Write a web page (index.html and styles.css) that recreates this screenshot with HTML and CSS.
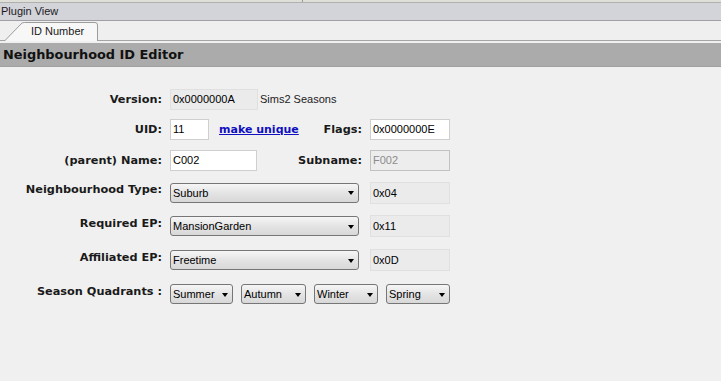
FILE: index.html
```html
<!DOCTYPE html>
<html>
<head>
<meta charset="utf-8">
<link rel="stylesheet" href="styles.css">
</head>
<body>
<div class="topstrip"><span class="tick"></span></div>
<div class="titlebar">Plugin View</div>
<div class="tabbar"><div class="tab">ID Number</div></div>
<div class="header">Neighbourhood ID Editor</div>
<div class="form">
  <div class="label">Version:</div>
  <div class="cell wide">
    <div class="field ro w87">0x0000000A</div>
    <span class="note">Sims2 Seasons</span>
  </div>

  <div class="label">UID:</div>
  <div class="cell">
    <div class="field w38">11</div>
    <a class="link" href="#">make unique</a>
    <span class="label sub">Flags:</span>
  </div>
  <div class="cell"><div class="field w80">0x0000000E</div></div>

  <div class="label">(parent) Name:</div>
  <div class="cell">
    <div class="field w86">C002</div>
    <span class="label sub">Subname:</span>
  </div>
  <div class="cell"><div class="field dis w80">F002</div></div>

  <div class="label up">Neighbourhood Type:</div>
  <div class="cell"><div class="select w189"><span>Suburb</span><i class="arrow"></i></div></div>
  <div class="cell"><div class="field ro w80 tall">0x04</div></div>

  <div class="label up">Required EP:</div>
  <div class="cell"><div class="select w189"><span>MansionGarden</span><i class="arrow"></i></div></div>
  <div class="cell"><div class="field ro w80 tall">0x11</div></div>

  <div class="label up">Affiliated EP:</div>
  <div class="cell"><div class="select w189"><span>Freetime</span><i class="arrow"></i></div></div>
  <div class="cell"><div class="field ro w80 tall">0x0D</div></div>

  <div class="label up">Season Quadrants :</div>
  <div class="cell wide seasons">
    <div class="select w63"><span>Summer</span><i class="arrow"></i></div>
    <div class="select w65"><span>Autumn</span><i class="arrow"></i></div>
    <div class="select w64"><span>Winter</span><i class="arrow"></i></div>
    <div class="select w64"><span>Spring</span><i class="arrow"></i></div>
  </div>
</div>
</body>
</html>
```
FILE: styles.css
```css
html, body {
  margin: 0;
  padding: 0;
}
body {
  width: 721px;
  height: 381px;
  overflow: hidden;
  background: #f0f0f0;
  font-family: "Liberation Sans", Arial, sans-serif;
  font-size: 11px;
  color: #000;
}
.topstrip {
  height: 2px;
  background: #dedfd6;
  border-bottom: 1px solid #b0b0b0;
  display: flex;
}
.tick {
  margin-left: 302px;
  width: 1px;
  background: #9a9a9a;
}
.titlebar {
  height: 17px;
  line-height: 17px;
  background: #d3d3da;
  border-bottom: 1px solid #a0a0a4;
  padding-left: 1px;
  color: #1a1a1a;
}
.tabbar {
  height: 19px;
  background: #efefef;
  border-bottom: 1px solid #a4a4a4;
  display: flex;
  align-items: flex-end;
}
.tab {
  margin-left: 4px;
  margin-bottom: -1px;
  width: 94px;
  height: 19px;
  box-sizing: border-box;
  padding-left: 27px;
  line-height: 19px;
  color: #1a1a1a;
  background: url("data:image/svg+xml;utf8,<svg xmlns='http://www.w3.org/2000/svg' width='94' height='19'><path d='M0.5 19 L17 2 Q18 0.5 20.5 0.5 L91 0.5 Q93.5 0.5 93.5 3 L93.5 19' fill='%23f7f7f7' stroke='%239c9c9c'/></svg>") no-repeat;
}
.header {
  margin-top: 2px;
  height: 23px;
  line-height: 23px;
  background: #ababab;
  border-bottom: 1px solid #a0a0a0;
  padding-left: 3px;
  font-family: "DejaVu Sans", Verdana, sans-serif;
  font-weight: bold;
  font-size: 12.9px;
  color: #111;
}
.form {
  margin-top: 17px;
  display: grid;
  grid-template-columns: 162px 192px 80px;
  grid-template-rows: 30px 31px 31px 33px 34px 34px 34px;
  column-gap: 8px;
  align-items: center;
}
.form > .cell:nth-child(3n+3) { margin-left: -1px; }
.label {
  font-family: "DejaVu Sans", Verdana, sans-serif;
  font-weight: bold;
  font-size: 11.3px;
  text-align: right;
  color: #1a1a1a;
  white-space: nowrap;
}
.label.up { padding-bottom: 6px; }
.cell {
  display: flex;
  align-items: center;
}
.cell.wide { grid-column: 2 / 4; }
.sub {
  margin-left: auto;
}
.field {
  box-sizing: border-box;
  height: 21px;
  line-height: 19px;
  padding-left: 2px;
  border: 1px solid #cfcfcf;
  background: #fff;
  white-space: nowrap;
}
.field.ro {
  background: #ebebeb;
  border-color: #e0e0e0;
}
.field.tall { height: 22px; line-height: 20px; }
.field.dis {
  background: #ededed;
  border-color: #c2c2c2;
  color: #8c8c8c;
}
.w38 { width: 39px; }
.w80 { width: 80px; }
.w86 { width: 87px; }
.w87 { width: 88px; }
.note {
  margin-left: 2px;
  color: #222;
}
.link {
  margin-left: 10px;
  font-family: "DejaVu Sans", Verdana, sans-serif;
  font-weight: bold;
  font-size: 11px;
  color: #1010c0;
  text-decoration: underline;
}
.select {
  box-sizing: border-box;
  height: 20px;
  border: 1px solid #767676;
  border-radius: 3px;
  background: linear-gradient(#f6f6f6, #e4e4e4 50%, #d8d8d8);
  display: flex;
  align-items: center;
  justify-content: space-between;
  padding: 0 4px 0 2px;
  line-height: 18px;
}
.arrow {
  width: 0;
  height: 0;
  border-left: 3.5px solid transparent;
  border-right: 3.5px solid transparent;
  border-top: 4px solid #000;
  margin-top: 1px;
}
.w189 { width: 189px; }
.w63 { width: 63px; }
.w64 { width: 64px; }
.w65 { width: 65px; }
.seasons { gap: 8px; }
```
